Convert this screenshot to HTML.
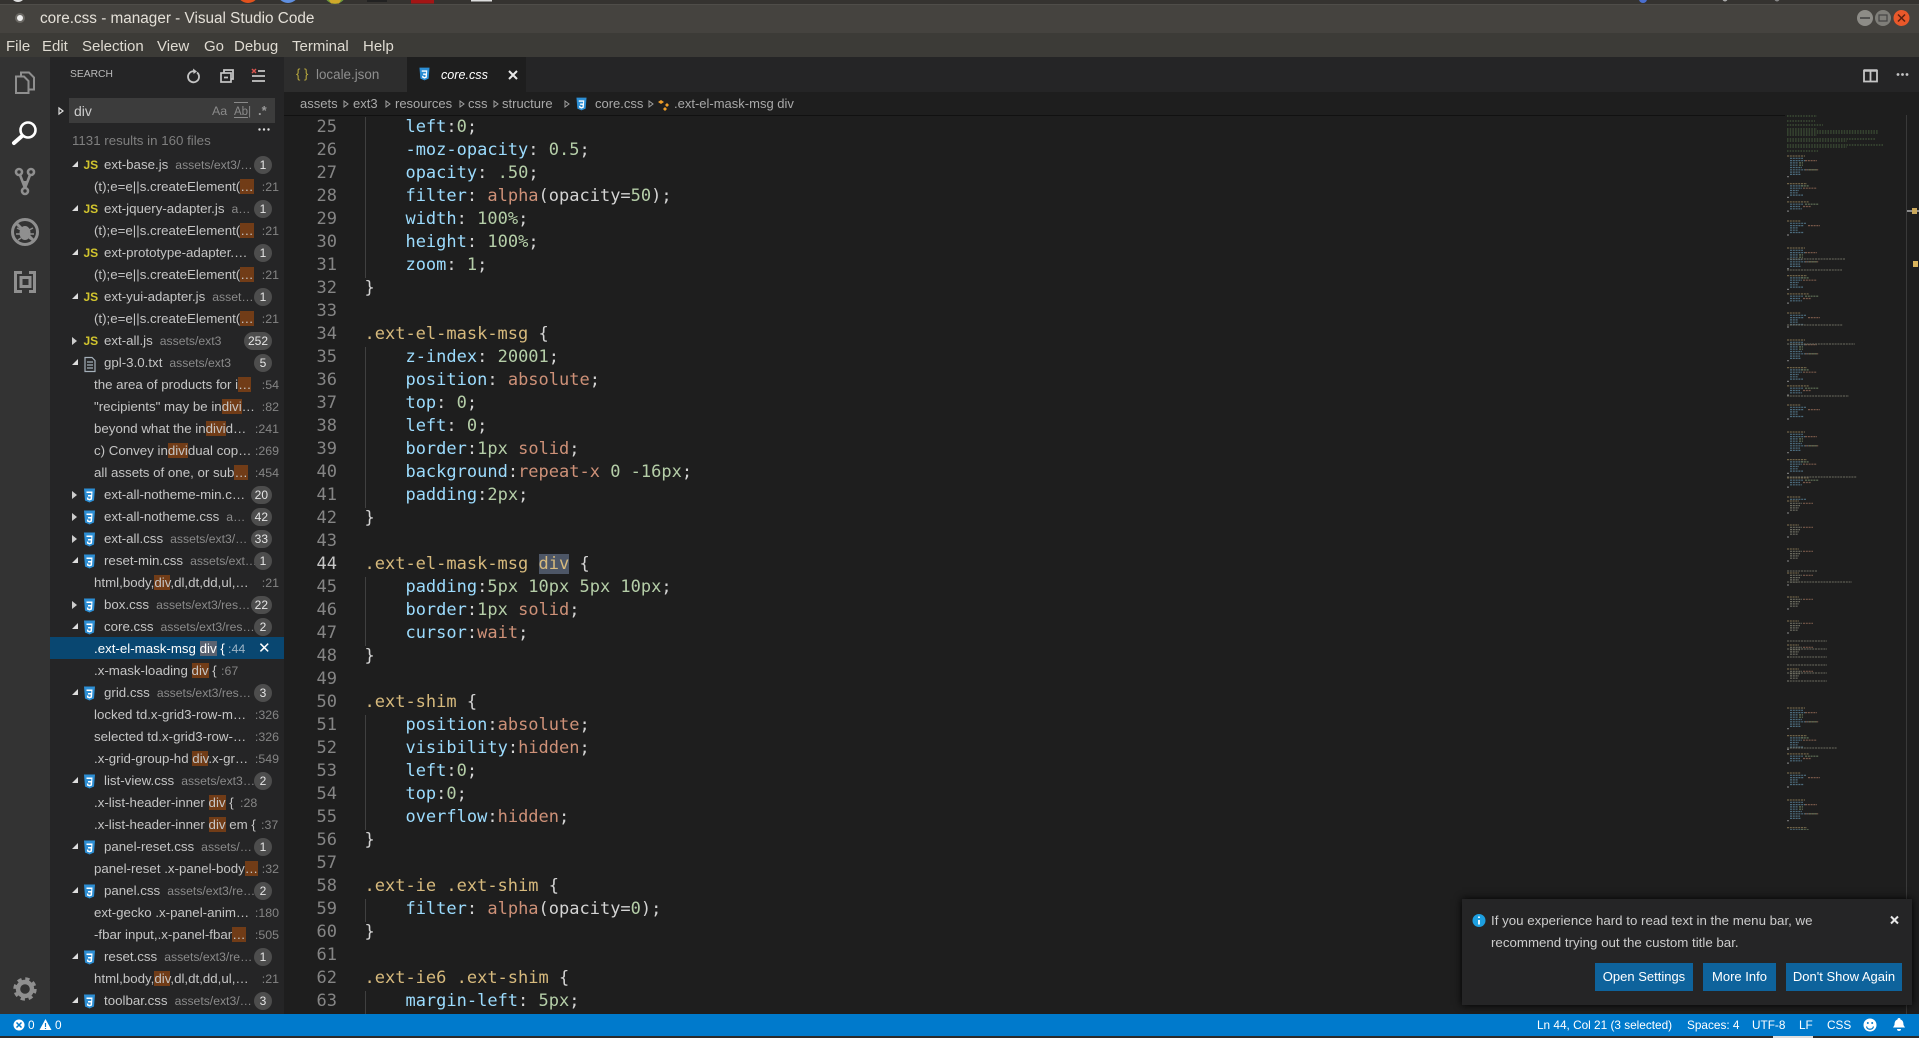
<!DOCTYPE html>
<html><head><meta charset="utf-8"><title>core.css - manager - Visual Studio Code</title>
<style>
html,body{margin:0;padding:0;background:#1e1e1e;}
body{width:1919px;height:1038px;position:relative;overflow:hidden;font-family:"Liberation Sans","DejaVu Sans",sans-serif;color:#ccc;}
.a{position:absolute;white-space:nowrap;}
#strip{left:0;top:0;width:1919px;height:5px;background:#353330;border-bottom:1px solid #4f4d49;box-sizing:border-box;}
#title{left:0;top:5px;width:1919px;height:28px;background:#45433f;}
#menu{left:0;top:33px;width:1919px;height:24px;background:#3c3b37;}
.t{font-size:15px;color:#dfdbd2;top:38px;line-height:17px;}
#act{left:0;top:57px;width:50px;height:957px;background:#333;}
#side{left:50px;top:57px;width:234px;height:957px;background:#252526;}
#tabs{left:284px;top:57px;width:1635px;height:35px;background:#252526;}
#tree{left:0;top:153px;width:284px;font-size:13.3px;line-height:22px;}
.r{position:relative;height:22px;white-space:nowrap;color:#cccccc;}
.f .n{position:absolute;left:104px;top:1px;color:#c5c5c5;}
.f .n span{color:#8a8a8a;font-size:12.2px;margin-left:7px;}
.f em{position:absolute;right:12px;top:3px;min-width:18px;height:18px;padding:0 3px;box-sizing:border-box;border-radius:9px;background:#4d4d4d;color:#e6e6e6;font-style:normal;font-size:12px;line-height:18px;text-align:center;}
.f em.b{padding:0 4px;}
.f i{position:absolute;left:72px;top:8px;width:0;height:0;}
.f i.d{border-right:6px solid #ddd;border-top:6px solid transparent;}
.f i.c{border-left:5px solid #ccc;border-top:4px solid transparent;border-bottom:4px solid transparent;}
.js{position:absolute;left:83.5px;top:1px;color:#d2c52e;font-weight:bold;font-size:12px;}
.m .x{position:absolute;left:94px;top:1px;color:#c5c5c5;}
.m b{font-weight:normal;background:#713c17;}
.m u{position:absolute;right:5px;top:1px;text-decoration:none;color:#858585;font-size:12.4px;}
.sel{background:#094771;margin-left:50px;}
.sel .x{color:#fff;left:44px;}
.sel b{background:#5a6270;}
.bc{top:96px;font-size:13px;line-height:16px;color:#a9a9a9;}
#ed{left:284px;top:92px;width:1635px;height:922px;background:#1e1e1e;}
.code{font-family:"DejaVu Sans Mono","Liberation Mono",monospace;font-size:17px;line-height:23px;}
#nums{left:284px;top:116px;width:53px;text-align:right;color:#858585;white-space:pre;}
#src{left:364.5px;top:116px;color:#d4d4d4;white-space:pre;}
#src .s{color:#d7ba7d}#src .p{color:#9cdcfe}#src .v{color:#ce9178}#src .k{color:#b5cea8}
#src .h{background:#4d5666;}
#note{left:1462px;top:899px;width:450px;height:106px;background:#252526;box-shadow:0 0 8px #000;}
.btn{top:963px;height:28px;line-height:28px;background:#0e639c;color:#fff;font-size:13px;text-align:center;}
#status{left:0;top:1014px;width:1919px;height:22px;background:#007acc;}
#bot{left:0;top:1036px;width:1919px;height:2px;background:#2b2b2b;}
.st{top:1014px;line-height:22px;color:#fff;font-size:11.8px;}
svg.o{position:absolute;left:0;top:0;}
</style></head><body>
<div class="a" id="strip"></div>
<div class="a" id="title"></div>
<div class="a" id="menu"></div>
<div class="a" style="left:40px;top:10px;font-size:15.3px;line-height:18px;color:#e4e0d8;">core.css - manager - Visual Studio Code</div>
<div class="a t" style="left:6px">File</div><div class="a t" style="left:42px">Edit</div><div class="a t" style="left:82px">Selection</div><div class="a t" style="left:157px">View</div><div class="a t" style="left:204px">Go</div><div class="a t" style="left:234px">Debug</div><div class="a t" style="left:292px">Terminal</div><div class="a t" style="left:363px">Help</div>

<div class="a" id="act"></div>
<div class="a" id="side"></div>
<div class="a" id="tabs"></div>
<div class="a" style="left:284px;top:57px;width:123px;height:35px;background:#2d2d2d;"></div>
<div class="a" style="left:407px;top:57px;width:119px;height:35px;background:#1e1e1e;"></div>
<div class="a" style="left:316px;top:66px;font-size:13.4px;line-height:18px;color:#8f8f8f;">locale.json</div>
<div class="a" style="left:296px;top:65px;font-size:13px;line-height:18px;color:#b8a83e;">{ }</div>
<div class="a" style="left:441px;top:66px;font-size:12.6px;line-height:18px;color:#fff;font-style:italic;">core.css</div>
<div class="a" id="ed"></div>

<div class="a" style="left:70px;top:68px;font-size:10.3px;line-height:14px;color:#bbb;">SEARCH</div>
<div class="a" style="left:69px;top:98px;width:206px;height:25px;background:#3c3c3c;"></div>
<div class="a" style="left:74px;top:103px;font-size:14px;line-height:17px;color:#ccc;">div</div>
<div class="a" style="left:212px;top:104px;font-size:12.4px;line-height:15px;color:#8a8a8a;">Aa</div>
<div class="a" style="left:234px;top:105px;font-size:11.5px;line-height:14px;color:#8a8a8a;">Ab|</div>
<div class="a" style="left:258px;top:103px;font-size:13px;line-height:15px;color:#9a9a9a;font-weight:bold;">.*</div>
<div class="a" style="left:72px;top:132px;font-size:13.3px;line-height:17px;color:#7f7f7f;">1131 results in 160 files</div>

<div class="a" id="tree">
<div class="r f"><i class="d"></i><span class="js">JS</span><div class="n">ext-base.js<span>assets/ext3/…</span></div><em>1</em></div>
<div class="r m"><div class="x">(t);e=e||s.createElement(<b>…</b></div><u>:21</u></div>
<div class="r f"><i class="d"></i><span class="js">JS</span><div class="n">ext-jquery-adapter.js<span>a…</span></div><em>1</em></div>
<div class="r m"><div class="x">(t);e=e||s.createElement(<b>…</b></div><u>:21</u></div>
<div class="r f"><i class="d"></i><span class="js">JS</span><div class="n">ext-prototype-adapter.…</div><em>1</em></div>
<div class="r m"><div class="x">(t);e=e||s.createElement(<b>…</b></div><u>:21</u></div>
<div class="r f"><i class="d"></i><span class="js">JS</span><div class="n">ext-yui-adapter.js<span>asset…</span></div><em>1</em></div>
<div class="r m"><div class="x">(t);e=e||s.createElement(<b>…</b></div><u>:21</u></div>
<div class="r f"><i class="c"></i><span class="js">JS</span><div class="n">ext-all.js<span>assets/ext3</span></div><em class="b">252</em></div>
<div class="r f"><i class="d"></i><div class="n">gpl-3.0.txt<span>assets/ext3</span></div><em>5</em></div>
<div class="r m"><div class="x">the area of products for i<b>…</b></div><u>:54</u></div>
<div class="r m"><div class="x">"recipients" may be in<b>divi</b>…</div><u>:82</u></div>
<div class="r m"><div class="x">beyond what the in<b>divi</b>d…</div><u>:241</u></div>
<div class="r m"><div class="x">c) Convey in<b>divi</b>dual cop…</div><u>:269</u></div>
<div class="r m"><div class="x">all assets of one, or sub<b>…</b></div><u>:454</u></div>
<div class="r f"><i class="c"></i><div class="n">ext-all-notheme-min.c…</div><em class="b">20</em></div>
<div class="r f"><i class="c"></i><div class="n">ext-all-notheme.css<span>a…</span></div><em class="b">42</em></div>
<div class="r f"><i class="c"></i><div class="n">ext-all.css<span>assets/ext3/…</span></div><em class="b">33</em></div>
<div class="r f"><i class="d"></i><div class="n">reset-min.css<span>assets/ext…</span></div><em>1</em></div>
<div class="r m"><div class="x">html,body,<b>div</b>,dl,dt,dd,ul,…</div><u>:21</u></div>
<div class="r f"><i class="c"></i><div class="n">box.css<span>assets/ext3/res…</span></div><em class="b">22</em></div>
<div class="r f"><i class="d"></i><div class="n">core.css<span>assets/ext3/res…</span></div><em>2</em></div>
<div class="r m sel"><div class="x">.ext-el-mask-msg <b>div</b> {</div><u style="left:178px;right:auto;color:#9db4c6">:44</u><u style="left:208px;right:auto;color:#fff;font-size:15px;font-weight:bold">✕</u></div>
<div class="r m"><div class="x">.x-mask-loading <b>div</b> {</div><u style="left:221px;right:auto">:67</u></div>
<div class="r f"><i class="d"></i><div class="n">grid.css<span>assets/ext3/res…</span></div><em>3</em></div>
<div class="r m"><div class="x">locked td.x-grid3-row-m…</div><u>:326</u></div>
<div class="r m"><div class="x">selected td.x-grid3-row-…</div><u>:326</u></div>
<div class="r m"><div class="x">.x-grid-group-hd <b>div</b>.x-gr…</div><u>:549</u></div>
<div class="r f"><i class="d"></i><div class="n">list-view.css<span>assets/ext3…</span></div><em>2</em></div>
<div class="r m"><div class="x">.x-list-header-inner <b>div</b> {</div><u style="left:240px;right:auto">:28</u></div>
<div class="r m"><div class="x">.x-list-header-inner <b>div</b> em {</div><u style="left:261px;right:auto">:37</u></div>
<div class="r f"><i class="d"></i><div class="n">panel-reset.css<span>assets/…</span></div><em>1</em></div>
<div class="r m"><div class="x">panel-reset .x-panel-body<b>…</b></div><u>:32</u></div>
<div class="r f"><i class="d"></i><div class="n">panel.css<span>assets/ext3/re…</span></div><em>2</em></div>
<div class="r m"><div class="x">ext-gecko .x-panel-anim…</div><u>:180</u></div>
<div class="r m"><div class="x">-fbar input,.x-panel-fbar<b>…</b></div><u>:505</u></div>
<div class="r f"><i class="d"></i><div class="n">reset.css<span>assets/ext3/re…</span></div><em>1</em></div>
<div class="r m"><div class="x">html,body,<b>div</b>,dl,dt,dd,ul,…</div><u>:21</u></div>
<div class="r f"><i class="d"></i><div class="n">toolbar.css<span>assets/ext3/…</span></div><em>3</em></div>
</div>

<div class="a bc" style="left:300px">assets</div><div class="a bc" style="left:353px">ext3</div><div class="a bc" style="left:395px">resources</div><div class="a bc" style="left:468px">css</div><div class="a bc" style="left:502px">structure</div><div class="a bc" style="left:595px">core.css</div><div class="a bc" style="left:674px">.ext-el-mask-msg div</div>

<div class="a code" id="nums">25
26
27
28
29
30
31
32
33
34
35
36
37
38
39
40
41
42
43
<span style="color:#c6c6c6">44</span>
45
46
47
48
49
50
51
52
53
54
55
56
57
58
59
60
61
62
63</div>
<div class="a code" id="src">    <span class="p">left</span>:<span class="k">0</span>;
    <span class="p">-moz-opacity</span>: <span class="k">0.5</span>;
    <span class="p">opacity</span>: <span class="k">.50</span>;
    <span class="p">filter</span>: <span class="v">alpha</span>(opacity=<span class="k">50</span>);
    <span class="p">width</span>: <span class="k">100%</span>;
    <span class="p">height</span>: <span class="k">100%</span>;
    <span class="p">zoom</span>: <span class="k">1</span>;
}

<span class="s">.ext-el-mask-msg</span> {
    <span class="p">z-index</span>: <span class="k">20001</span>;
    <span class="p">position</span>: <span class="v">absolute</span>;
    <span class="p">top</span>: <span class="k">0</span>;
    <span class="p">left</span>: <span class="k">0</span>;
    <span class="p">border</span>:<span class="k">1px</span> <span class="v">solid</span>;
    <span class="p">background</span>:<span class="v">repeat-x</span> <span class="k">0 -16px</span>;
    <span class="p">padding</span>:<span class="k">2px</span>;
}

<span class="s">.ext-el-mask-msg <span class="h">div</span></span> {
    <span class="p">padding</span>:<span class="k">5px 10px 5px 10px</span>;
    <span class="p">border</span>:<span class="k">1px</span> <span class="v">solid</span>;
    <span class="p">cursor</span>:<span class="v">wait</span>;
}

<span class="s">.ext-shim</span> {
    <span class="p">position</span>:<span class="v">absolute</span>;
    <span class="p">visibility</span>:<span class="v">hidden</span>;
    <span class="p">left</span>:<span class="k">0</span>;
    <span class="p">top</span>:<span class="k">0</span>;
    <span class="p">overflow</span>:<span class="v">hidden</span>;
}

<span class="s">.ext-ie .ext-shim</span> {
    <span class="p">filter</span>: <span class="v">alpha</span>(opacity=<span class="k">0</span>);
}

<span class="s">.ext-ie6 .ext-shim</span> {
    <span class="p">margin-left</span>: <span class="k">5px</span>;</div>

<svg class="o" width="1919" height="1038" viewBox="0 0 1919 1038" fill="none">
<defs>
<clipPath id="top5"><rect x="0" y="0" width="1919" height="5"/></clipPath>
<symbol id="css" viewBox="0 0 12 14" overflow="visible"><path d="M0.5 0h11l-1 12L6 14l-4.5-2z" fill="#2d8fd5"/><path d="M3 3h6l-.5 8L6 12l-2.500-1-.1-2h1.400l.1 1 1.100.4 1.100-.4.1-2H4.500V6.500h3.200l.1-2H3z" fill="#fff"/></symbol>
<pattern id="m1" patternUnits="userSpaceOnUse" x="1787" y="155" width="70" height="92">
<g stroke-width="1.2" stroke-dasharray="2 .8">
<path stroke="#8e7d58" d="M0 1h18M0 28.600h20M0 46.900h22M0 66h14"/>
<path stroke="#5f8ba3" d="M3 3.300h13M3 5.600h15M3 7.900h8M3 10.200h8M3 12.500h12M3 14.800h18M3 17.100h10M3 19.400h11M3 30.900h14M3 33.200h12M3 35.500h9M3 37.800h8M3 40.100h13M3 49.200h13M3 51.500h10M3 53.800h12M3 68.300h16M3 70.600h14M3 72.900h8M3 75.200h8M3 77.500h14"/>
<path stroke="#9a6f5a" d="M18 5.600h12M18 14.800h14M16 33.200h14M16 51.500h8M21 70.600h12"/>
<path stroke="#7d9670" d="M12 7.900h4M12 10.200h4M22 14.800h8M14 30.900h8M18 49.200h14"/>
<path stroke="#9a9a9a" d="M0 21.700h2M0 42.400h2M0 56.100h2M0 80h2"/>
</g></pattern>
<pattern id="m2" patternUnits="userSpaceOnUse" x="1787" y="500" width="70" height="24">
<g stroke-width="1.2" stroke-dasharray="2 .8">
<path stroke="#8e7d58" d="M0 1h12"/>
<path stroke="#8a8a7a" d="M3 3.300h12M3 5.600h10M3 7.900h9M3 10.200h8"/>
<path stroke="#9a6f5a" d="M16 3.300h10"/>
<path stroke="#9a9a9a" d="M0 13h2"/>
</g></pattern>
</defs>

<!-- top strip icons -->
<g clip-path="url(#top5)">
<circle cx="18" cy="-5" r="7" fill="#ddd"/><circle cx="248" cy="-8" r="11" fill="#e2521d"/><circle cx="288" cy="-8" r="11" fill="#5f8fe0"/>
<circle cx="335" cy="-7" r="11" fill="#6e9a3a"/><path d="M329 0h12l-2 3.500h-8z" fill="#d0a82a"/><rect x="367" y="0" width="20" height="2" fill="#222"/><rect x="411" y="0" width="23" height="3.500" fill="#a31515"/><rect x="471" y="0" width="21" height="1.500" fill="#ddd"/>
<circle cx="1643" cy="-1" r="4" fill="#4a6fd0"/><circle cx="1725" cy="-1" r="2.500" fill="#aaa"/><circle cx="1777" cy="-1" r="2.500" fill="#888"/>
</g>
<circle cx="20" cy="18" r="5" fill="#6b6964"/><circle cx="20" cy="18" r="3" fill="#eee"/>

<!-- window buttons -->
<circle cx="1865" cy="18" r="8" fill="#8d8c87"/><path d="M1860 18h10" stroke="#444" stroke-width="1.6"/>
<circle cx="1883" cy="18" r="8" fill="#7f7e79"/><rect x="1879" y="15" width="8" height="6" stroke="#444" stroke-width="1.2"/>
<circle cx="1901.500" cy="18" r="8" fill="#e9582a"/><path d="M1898 14.500l7 7M1905 14.500l-7 7" stroke="#5a2010" stroke-width="1.500"/>

<!-- activity bar -->
<g stroke="#8f8f8f" stroke-width="2">
<path d="M16 76.500h8l4.500 4.500v12H16z"/><path d="M21 76v-3.500h8l5 5v12h-5.500"/>
<circle cx="28" cy="130" r="7.500" stroke="#fff" stroke-width="2.600"/><path d="M22 136l-8 7" stroke="#fff" stroke-width="4" stroke-linecap="round"/>
<g stroke-width="2.600"><circle cx="19" cy="172" r="3"/><circle cx="31" cy="172" r="3"/><circle cx="25" cy="191" r="3"/><path d="M20 175l5 13M30 175l-5 13M25 181v7"/></g>
<circle cx="25" cy="232" r="12.500" stroke-width="3"/><path d="M16 223l18 18" stroke-width="3"/>
<ellipse cx="25" cy="233" rx="4.500" ry="6" fill="#8f8f8f"/><path d="M17 228l4 2M33 228l-4 2M16 234h4M34 234h-4M18 240l3-2M32 240l-3-2" stroke-width="1.500"/>
<path d="M22 272.500h-6.500v19h6.500M29 272.500h5.500v19H29" stroke-width="3"/><rect x="21" y="277.500" width="9" height="9" stroke-width="3"/>
<circle cx="25" cy="989" r="7" stroke-width="4.400"/><circle cx="25" cy="989" r="10" stroke-width="3.400" stroke-dasharray="4.200 3.650"/>
</g>

<!-- sidebar header icons -->
<g stroke="#c5c5c5" stroke-width="1.800">
<path d="M197 72.500a5.500 5.500 0 1 1-3-1.200"/><path d="M193 68.500l4 3-3.500 2.500z" fill="#c5c5c5" stroke="none"/>
<rect x="221" y="73" width="10" height="9" stroke-width="1.700"/><path d="M224 73v-3h9v9h-2M224 77.500h4"/>
<path d="M252 76h13M252 81h13M258 71h7"/><path d="M252 69l4 4M256 69l-4 4" stroke="#d9544f" stroke-width="1.500"/>
</g>
<path d="M59 114l0-6 4 3z" fill="#222" stroke="#ddd" stroke-width="1.200"/>
<g fill="#ddd"><circle cx="259.500" cy="129.500" r="1.200"/><circle cx="264" cy="129.500" r="1.200"/><circle cx="268.500" cy="129.500" r="1.200"/></g>
<path d="M234 102.500h14M234 117.500h14" stroke="#8a8a8a" stroke-width="1"/>
<path d="M85 357.500h7l3 3v11H85zM87 362h6M87 365h6M87 368h6" stroke="#a5b0ba" stroke-width="1.200"/>

<!-- css file icons -->
<g>
<use href="#css" x="83.500" y="488" width="12" height="15"/><use href="#css" x="83.500" y="510" width="12" height="15"/><use href="#css" x="83.500" y="532" width="12" height="15"/><use href="#css" x="83.500" y="554" width="12" height="15"/>
<use href="#css" x="83.500" y="598" width="12" height="15"/><use href="#css" x="83.500" y="620" width="12" height="15"/><use href="#css" x="83.500" y="686" width="12" height="15"/>
<use href="#css" x="83.500" y="774" width="12" height="15"/><use href="#css" x="83.500" y="840" width="12" height="15"/><use href="#css" x="83.500" y="884" width="12" height="15"/><use href="#css" x="83.500" y="950" width="12" height="15"/><use href="#css" x="83.500" y="994" width="12" height="15"/>
<use href="#css" x="419" y="67" width="11" height="14"/><use href="#css" x="576" y="97" width="11" height="14"/>
</g>
<path d="M509 71l8 8M517 71l-8 8" stroke="#e8e8e8" stroke-width="2"/>

<!-- breadcrumb arrows -->
<g fill="none" stroke="#a0a0a0" stroke-width="1"><path d="M344 101l4 3-4 3zM386 101l4 3-4 3zM460 101l4 3-4 3zM494 101l4 3-4 3zM565 101l4 3-4 3zM649 101l4 3-4 3z"/></g>
<path d="M658 102l3-2 3 2-3 2zM665 105l2-2 2 2-2 2zM663 109l2-2 2 2-2 2z" fill="#ee9d28"/>

<!-- editor actions -->
<path d="M1864 70.500h13v11h-13zM1870.500 70.500v11" stroke="#c5c5c5" stroke-width="1.800"/><path d="M1864 70.500h13" stroke="#c5c5c5" stroke-width="2.500"/>
<g fill="#c5c5c5"><circle cx="1898" cy="74.500" r="1.400"/><circle cx="1902.500" cy="74.500" r="1.400"/><circle cx="1907" cy="74.500" r="1.400"/></g>

<!-- indent guides -->
<path d="M365.500 117v161M365.500 347v161M365.500 577v69M365.500 715v115M365.500 899v23M365.500 991v23" stroke="#404040"/>
<path d="M284 115.500h1501" stroke="#111" stroke-width="1"/>

<!-- minimap -->
<g opacity=".72">
<g stroke-width="1.100" stroke-dasharray="1.500 1.200" stroke="#5d7f4e">
<path d="M1787 116h30M1787 121h28M1787 125h36M1787 129h30M1787 131h91M1787 133h91M1787 135h30M1787 139h88M1787 141h60M1787 145h96M1787 147h60M1787 151h31"/>
</g>
<rect x="1787" y="155" width="70" height="345" fill="url(#m1)"/>
<path d="M1787 259h58M1787 270h55M1787 325h56M1787 344h68M1787 396h62M1787 477h70" stroke="#8a8a7a" stroke-width="1.100" stroke-dasharray="2 .8"/>
<rect x="1787" y="500" width="45" height="190" fill="url(#m2)"/>
<path d="M1787 571h30M1787 582h65M1787 641h40M1787 649h40M1787 657h40M1787 665h40M1787 673h40M1787 681h40" stroke="#8a8a7a" stroke-width="1.100" stroke-dasharray="2 .8"/>
<rect x="1787" y="700" width="70" height="130" fill="url(#m1)"/>
<path d="M1787 748h50" stroke="#8a8a7a" stroke-width="1.100" stroke-dasharray="2 .8"/>
</g>

<!-- overview ruler -->
<path d="M1906.500 115v899" stroke="#3a3a3a"/>
<path d="M1907 211h12" stroke="#8a8a8a" stroke-width="2"/>
<rect x="1912" y="208" width="5" height="6" fill="#c9a85c"/><rect x="1913" y="261" width="5" height="6" fill="#d9b45c"/>
</svg>

<div class="a" id="note"></div>
<svg class="o" width="1919" height="1038" viewBox="0 0 1919 1038" fill="none">
<circle cx="1479" cy="920.500" r="6.500" fill="#1d9fe0"/><path d="M1479 920v4.500M1479 916.500v1.500" stroke="#fff" stroke-width="1.800"/>
<path d="M1891 916.500l7 7M1898 916.500l-7 7" stroke="#e8e8e8" stroke-width="2"/>
</svg>
<div class="a" style="left:1491px;top:912px;font-size:13.3px;line-height:17px;color:#ccc;">If you experience hard to read text in the menu bar, we</div>
<div class="a" style="left:1491px;top:934px;font-size:13.3px;line-height:17px;color:#ccc;">recommend trying out the custom title bar.</div>
<div class="a btn" style="left:1595px;width:98px;">Open Settings</div>
<div class="a btn" style="left:1703px;width:73px;">More Info</div>
<div class="a btn" style="left:1786px;width:116px;">Don't Show Again</div>

<div class="a" id="status"></div>
<div class="a" id="bot"></div>
<div class="a" style="left:1773px;top:1036px;width:40px;height:2px;background:#ddd;"></div>
<div class="a st" style="left:28px">0</div><div class="a st" style="left:55px">0</div>
<div class="a st" style="left:1537px">Ln 44, Col 21 (3 selected)</div>
<div class="a st" style="left:1687px">Spaces: 4</div>
<div class="a st" style="left:1752px">UTF-8</div>
<div class="a st" style="left:1799px">LF</div>
<div class="a st" style="left:1827px">CSS</div>
<svg class="o" width="1919" height="1038" viewBox="0 0 1919 1038" fill="none">
<circle cx="19" cy="1025" r="5.500" fill="#fff"/><path d="M16.500 1022.500l5 5M21.500 1022.500l-5 5" stroke="#007acc" stroke-width="1.500"/>
<path d="M45.500 1019l6 11h-12z" fill="#fff"/><path d="M45.500 1023v4M45.500 1028v1" stroke="#007acc" stroke-width="1.200"/>
<circle cx="1870" cy="1025" r="6.500" fill="#fff"/><circle cx="1867.800" cy="1023" r="1" fill="#007acc"/><circle cx="1872.200" cy="1023" r="1" fill="#007acc"/><path d="M1866.500 1026.500a3.600 3.600 0 0 0 7 0" stroke="#007acc" stroke-width="1.200"/>
<path d="M1899 1018a1.500 1.500 0 0 1 1.500 1.500c2.500.8 3 3 3 5.500l1.500 2.500h-12l1.500-2.500c0-2.500.5-4.700 3-5.500a1.500 1.500 0 0 1 1.500-1.500zM1897 1029h4a2 2 0 0 1-4 0z" fill="#fff"/>
</svg>
</body></html>
